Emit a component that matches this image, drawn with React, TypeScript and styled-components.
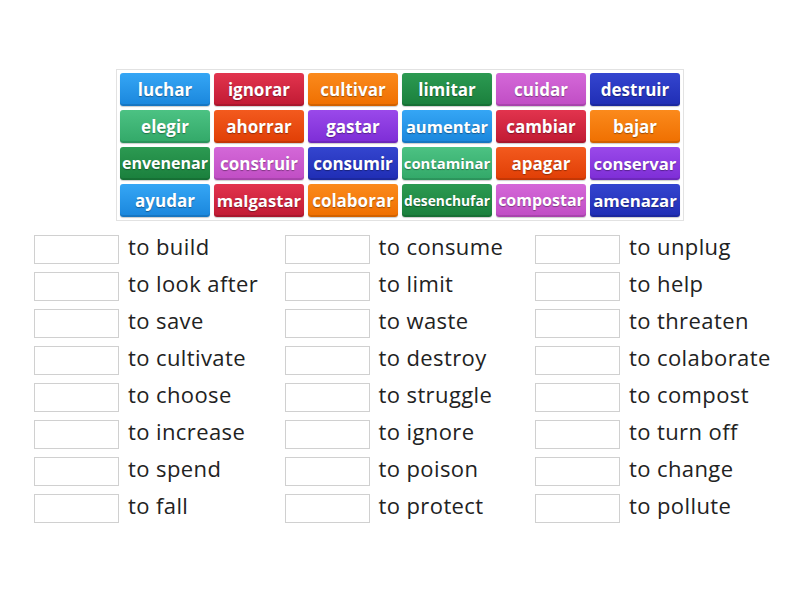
import { FC } from 'react';
import styled, { createGlobalStyle } from 'styled-components';

const GlobalStyle = createGlobalStyle`
  html, body {
    margin: 0;
    padding: 0;
    background: #ffffff;
  }
  body {
    font-family: 'Open Sans', 'Liberation Sans', sans-serif;
  }
`;

const palette = [
  ['#35a6f5', '#1a86dc'], // blue
  ['#e2344e', '#c01a33'], // crimson
  ['#fb8a1c', '#ef6f00'], // orange
  ['#2c9a52', '#1a7f3c'], // dark green
  ['#d468d8', '#c04dc4'], // orchid
  ['#3445cf', '#1f2db4'], // dark blue
  ['#4cc283', '#32a868'], // green
  ['#f35a1e', '#e03e05'], // red orange
  ['#9a49ea', '#7d2dd6'], // purple
];

const words: { text: string; size?: number }[] = [
  { text: 'luchar' },
  { text: 'ignorar' },
  { text: 'cultivar' },
  { text: 'limitar' },
  { text: 'cuidar' },
  { text: 'destruir' },
  { text: 'elegir' },
  { text: 'ahorrar' },
  { text: 'gastar' },
  { text: 'aumentar', size: 16.5 },
  { text: 'cambiar' },
  { text: 'bajar' },
  { text: 'envenenar', size: 16 },
  { text: 'construir' },
  { text: 'consumir' },
  { text: 'contaminar', size: 14.8 },
  { text: 'apagar' },
  { text: 'conservar', size: 16.7 },
  { text: 'ayudar' },
  { text: 'malgastar', size: 16.7 },
  { text: 'colaborar' },
  { text: 'desenchufar', size: 13.8 },
  { text: 'compostar', size: 16 },
  { text: 'amenazar', size: 16.8 },
];

const prompts = [
  ['to build', 'to consume', 'to unplug'],
  ['to look after', 'to limit', 'to help'],
  ['to save', 'to waste', 'to threaten'],
  ['to cultivate', 'to destroy', 'to colaborate'],
  ['to choose', 'to struggle', 'to compost'],
  ['to increase', 'to ignore', 'to turn off'],
  ['to spend', 'to poison', 'to change'],
  ['to fall', 'to protect', 'to pollute'],
];

const Page = styled.div`
  width: 800px;
  height: 600px;
  padding-top: 69px;
  box-sizing: border-box;
`;

const Bank = styled.div`
  width: 568px;
  margin: 0 auto;
  box-sizing: border-box;
  border: 1px solid #e2e2e2;
  padding: 3px;
  display: grid;
  grid-template-columns: repeat(6, 90px);
  grid-auto-rows: 33px;
  gap: 4px;
`;

const Tile = styled.div<{ $top: string; $bottom: string; $size: number }>`
  display: flex;
  align-items: center;
  justify-content: center;
  padding-bottom: 1px;
  box-sizing: border-box;
  border-radius: 3px;
  background: linear-gradient(${(p) => p.$top}, ${(p) => p.$bottom});
  box-shadow: inset 0 -2px 0 rgba(0, 0, 0, 0.12), 0 1px 1px rgba(0, 0, 0, 0.2);
  color: #ffffff;
  font-weight: 700;
  font-size: ${(p) => p.$size}px;
  white-space: nowrap;
  text-shadow: 0 1px 1px rgba(0, 0, 0, 0.35);
`;

const Answers = styled.div`
  margin-top: 14px;
  padding-left: 34px;
  display: grid;
  grid-template-columns: repeat(3, 250.5px);
  grid-auto-rows: 29px;
  row-gap: 8px;
`;

const Row = styled.div`
  display: flex;
  align-items: center;
  gap: 9px;
`;

const Slot = styled.div`
  width: 85px;
  height: 29px;
  box-sizing: border-box;
  border: 1px solid #d0d0d0;
  background: #ffffff;
  flex-shrink: 0;
`;

const Prompt = styled.span`
  font-size: 22px;
  line-height: 26px;
  margin-top: -8px;
  color: #222222;
  white-space: nowrap;
  letter-spacing: 0.4px;
`;

const App: FC = () => (
  <Page>
    <GlobalStyle />
    <Bank>
      {words.map((w, i) => {
        const [top, bottom] = palette[i % palette.length];
        return (
          <Tile key={w.text} $top={top} $bottom={bottom} $size={w.size ?? 17}>
            {w.text}
          </Tile>
        );
      })}
    </Bank>
    <Answers>
      {prompts.flat().map((p) => (
        <Row key={p}>
          <Slot />
          <Prompt>{p}</Prompt>
        </Row>
      ))}
    </Answers>
  </Page>
);

export default App;
